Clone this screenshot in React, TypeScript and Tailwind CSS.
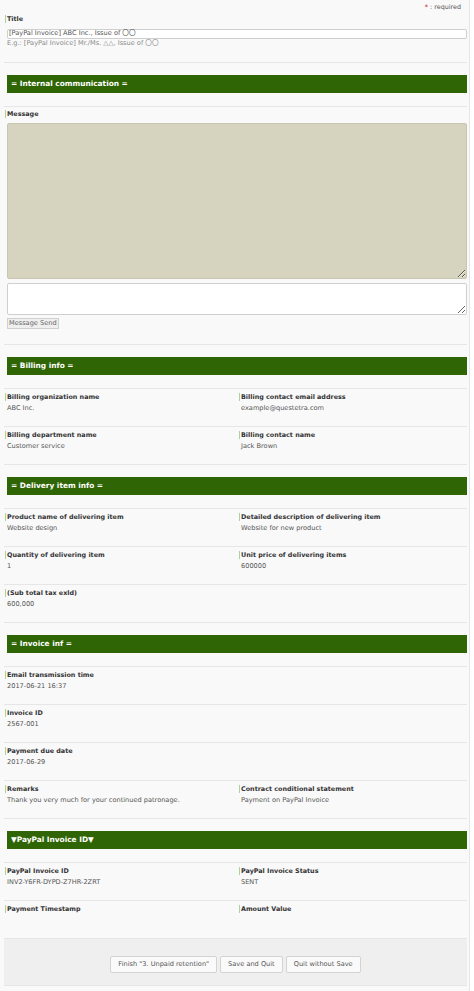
import React from "react";

type Field = { label: string; value?: string };

const font = { fontFamily: '"DejaVu Sans", Verdana, "Noto Sans CJK JP", sans-serif' };

function SectionHeader({ title }: { title: string }) {
  return (
    <div className="border-t border-[#e6e6e6] pt-[12px] pb-[13px] pl-[3px]">
      <div className="flex h-[18px] items-center bg-[#2f6505] pl-[4px] text-[7.4px] font-bold text-white">{title}</div>
    </div>
  );
}

function Label({ text }: { text: string }) {
  return (
    <div className="flex h-[8px] items-center border-l border-[#a9d39a] pl-[1px] text-[6.4px] font-bold leading-none text-[#333]">
      {text}
    </div>
  );
}

function FieldCell({ field }: { field: Field }) {
  return (
    <div>
      <Label text={field.label} />
      <div className="mt-[3px] h-[9px] pl-[2px] text-[6.6px] leading-[9px] text-[#555]">{field.value}</div>
    </div>
  );
}

function Row({ fields }: { fields: Field[] }) {
  return (
    <div className="h-[38px] border-t border-[#e6e6e6] pt-[4px] pl-[1px]">
      <div className="grid grid-cols-[234px_1fr]">
        {fields.map((f) => (
          <FieldCell field={f} key={f.label} />
        ))}
      </div>
    </div>
  );
}

export default function App() {
  return (
    <div className="min-h-[991px] bg-white" style={font}>
      <div className="w-[470px] border-r border-[#e6e6e6] bg-[#f9f9f9] pl-[4px] pr-[2px]">
        <div className="flex h-[14px] items-center justify-end pt-[2px] pr-[6px] text-[6.4px] text-[#555]">
          <span className="text-[#c00]">*</span>&nbsp;: required
        </div>

        <div className="h-[48px] pt-[1px] pl-[1px]">
          <Label text="Title" />
          <div className="mt-[6px] ml-[2px] flex h-[10px] items-center rounded-[2px] border border-[#cfcfcf] bg-white pl-[1px] text-[6.6px] text-[#555]">
            [PayPal Invoice] ABC Inc., Issue of 〇〇
          </div>
          <div className="h-[9px] pl-[2px] text-[6.6px] leading-[9px] text-[#8a8a8a]">
            E.g.: [PayPal Invoice] Mr./Ms. △△, Issue of 〇〇
          </div>
        </div>

        <SectionHeader title="= Internal communication =" />

        <div className="h-[238px] border-t border-[#e6e6e6] pt-[3px] pl-[1px]">
          <Label text="Message" />
          <div className="ml-[2px] mt-[5px] flex flex-col">
            <textarea
              className="block h-[156px] w-full resize-y rounded-[2px] border border-[#c8c5b0] bg-[#d6d4bf] outline-none"
              readOnly
            />
            <textarea
              className="mt-[4px] block h-[32px] w-full resize-y rounded-[2px] border border-[#cfcfcf] bg-white outline-none"
              readOnly
            />
            <div>
              <button className="mt-[3px] flex h-[11px] items-center border border-[#d0d0d0] bg-[#efefef] px-[1px] text-[6.6px] text-[#666]">
                Message Send
              </button>
            </div>
          </div>
        </div>

        <SectionHeader title="= Billing info =" />
        <Row
          fields={[
            { label: "Billing organization name", value: "ABC Inc." },
            { label: "Billing contact email address", value: "example@questetra.com" },
          ]}
        />
        <Row
          fields={[
            { label: "Billing department name", value: "Customer service" },
            { label: "Billing contact name", value: "Jack Brown" },
          ]}
        />

        <SectionHeader title="= Delivery item info =" />
        <Row
          fields={[
            { label: "Product name of delivering item", value: "Website design" },
            { label: "Detailed description of delivering item", value: "Website for new product" },
          ]}
        />
        <Row
          fields={[
            { label: "Quantity of delivering item", value: "1" },
            { label: "Unit price of delivering items", value: "600000" },
          ]}
        />
        <Row fields={[{ label: "(Sub total tax exld)", value: "600,000" }]} />

        <SectionHeader title="= Invoice inf =" />
        <Row fields={[{ label: "Email transmission time", value: "2017-06-21 16:37" }]} />
        <Row fields={[{ label: "Invoice ID", value: "2567-001" }]} />
        <Row fields={[{ label: "Payment due date", value: "2017-06-29" }]} />
        <Row
          fields={[
            { label: "Remarks", value: "Thank you very much for your continued patronage." },
            { label: "Contract conditional statement", value: "Payment on PayPal Invoice" },
          ]}
        />

        <SectionHeader title="▼PayPal Invoice ID▼" />
        <Row
          fields={[
            { label: "PayPal Invoice ID", value: "INV2-Y6FR-DYPD-Z7HR-2ZRT" },
            { label: "PayPal Invoice Status", value: "SENT" },
          ]}
        />
        <Row fields={[{ label: "Payment Timestamp" }, { label: "Amount Value" }]} />

        <div className="flex h-[48px] items-start justify-center gap-[3px] border-t border-b border-[#e6e6e6] bg-[#efefef] pt-[17px]">
          {['Finish "3. Unpaid retention"', "Save and Quit", "Quit without Save"].map((t) => (
            <button
              className="flex h-[17px] items-center rounded-[2px] border border-[#d3d3d3] bg-[#fafafa] px-[7px] text-[6.6px] text-[#555]"
              key={t}
            >
              {t}
            </button>
          ))}
        </div>
        <div className="h-[6px]" />
      </div>
    </div>
  );
}
